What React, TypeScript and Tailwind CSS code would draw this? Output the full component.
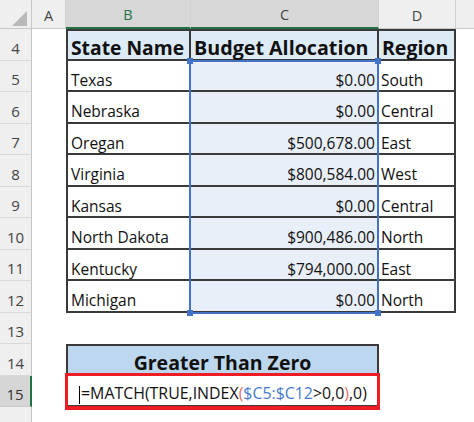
import React from "react";

type R = { n: number; b: string; c: string; d: string };

const data: R[] = [
  { n: 5, b: "Texas", c: "$0.00", d: "South" },
  { n: 6, b: "Nebraska", c: "$0.00", d: "Central" },
  { n: 7, b: "Oregan", c: "$500,678.00", d: "East" },
  { n: 8, b: "Virginia", c: "$800,584.00", d: "West" },
  { n: 9, b: "Kansas", c: "$0.00", d: "Central" },
  { n: 10, b: "North Dakota", c: "$900,486.00", d: "North" },
  { n: 11, b: "Kentucky", c: "$794,000.00", d: "East" },
  { n: 12, b: "Michigan", c: "$0.00", d: "North" },
];

function RowHead({ n, active }: { n?: number; active?: boolean }) {
  return (
    <div
      className={
        active
          ? "w-[32px] shrink-0 flex items-end justify-center pb-[4px] bg-[#d6d6d6] border-r-2 border-r-[#217346] border-b border-b-[#c8c8c8] text-[15px] leading-none text-[#333]"
          : "w-[32px] shrink-0 flex items-end justify-center pb-[4px] bg-[#efefef] border-r border-r-[#c4c4c4] border-b border-b-[#d8d8d8] text-[15px] leading-none text-[#444]"
      }
    >
      {n}
    </div>
  );
}

function ColHead({ label, sel, green, w }: { label: string; sel?: boolean; green?: boolean; w: string }) {
  return (
    <div
      className={
        (sel
          ? "bg-[#d7d7d7] border-b-2 border-b-[#217346] "
          : "bg-[#efefef] border-b border-b-[#c8c8c8] ") +
        "shrink-0 flex items-center justify-center pt-[4px] border-r border-r-[#cfcfcf] text-[14.5px] leading-none " +
        (green ? "text-[#217346] " : "text-[#444] ") +
        w
      }
    >
      {label}
    </div>
  );
}

export default function App() {
  return (
    <div className="w-[474px] h-[422px] overflow-hidden bg-white font-['Open_Sans','Noto_Sans',sans-serif] text-[#111]">
      {/* column headers */}
      <div className="flex h-[29px]">
        <div className="w-[32px] shrink-0 bg-[#efefef] border-r border-r-[#c8c8c8] border-b border-b-[#c8c8c8] relative">
          <svg className="absolute left-[12px] top-[11px]" width="15" height="15" viewBox="0 0 15 15">
            <polygon points="15,0 15,15 0,15" fill="#b9b9b9" />
          </svg>
        </div>
        <ColHead label="A" w="w-[34px]" />
        <ColHead label="B" sel green w="w-[125px]" />
        <ColHead label="C" sel w="w-[188px]" />
        <ColHead label="D" w="w-[77px]" />
        <div className="flex-1 bg-[#efefef] border-b border-b-[#c8c8c8]" />
      </div>

      <div className="relative">
        {/* row 4 header */}
        <div className="flex h-[31.5px]">
          <RowHead n={4} />
          <div className="w-[34px] shrink-0" />
          <div className="w-[125px] shrink-0 bg-[#ddebf7] border-2 border-[#3a3a3a] flex items-end px-[3px] pb-[1px] text-[19.3px] font-bold leading-none whitespace-nowrap">
            State Name
          </div>
          <div className="w-[188px] shrink-0 bg-[#ddebf7] border-y-2 border-r-2 border-[#3a3a3a] flex items-end px-[3px] pb-[1px] text-[19.7px] font-bold leading-none whitespace-nowrap">
            Budget Allocation
          </div>
          <div className="w-[77px] shrink-0 bg-[#ddebf7] border-y-2 border-r-2 border-[#3a3a3a] flex items-end px-[3px] pb-[1px] text-[19.5px] font-bold leading-none whitespace-nowrap">
            Region
          </div>
          <div className="flex-1" />
        </div>

        {data.map((r) => (
          <div key={r.n} className="flex h-[31.5px]">
            <RowHead n={r.n} />
            <div className="w-[34px] shrink-0" />
            <div className="w-[125px] shrink-0 border-x-2 border-b-2 border-[#3a3a3a] flex items-end px-[3px] pb-[2px] text-[15.5px] leading-none whitespace-nowrap">
              {r.b}
            </div>
            <div className="w-[188px] shrink-0 bg-[#e9eff8] border-r-2 border-b-2 border-[#3a3a3a] flex items-end justify-end px-[2px] pb-[2px] text-[15.5px] leading-none whitespace-nowrap">
              {r.c}
            </div>
            <div className="w-[77px] shrink-0 border-r-2 border-b-2 border-[#3a3a3a] flex items-end px-[2px] pb-[2px] text-[15.5px] leading-none whitespace-nowrap">
              {r.d}
            </div>
            <div className="flex-1" />
          </div>
        ))}

        {/* row 13 */}
        <div className="flex h-[31.5px]">
          <RowHead n={13} />
          <div className="flex-1" />
        </div>

        {/* row 14 */}
        <div className="flex h-[31.5px]">
          <RowHead n={14} />
          <div className="w-[34px] shrink-0" />
          <div className="w-[313px] shrink-0 bg-[#bdd7ee] border-2 border-[#3a3a3a] flex items-end justify-center pb-[1px] text-[19.5px] font-bold leading-none whitespace-nowrap">
            Greater Than Zero
          </div>
          <div className="flex-1" />
        </div>

        {/* row 15 */}
        <div className="flex h-[31.5px]">
          <RowHead n={15} active />
          <div className="w-[34px] shrink-0" />
          <div className="w-[313px] shrink-0 relative border-x-2 border-b-2 border-[#3a3a3a] flex items-end pl-[11px] pb-[3px] text-[15.9px] leading-none whitespace-nowrap">
            <span className="inline-block w-[1px] h-[18px] bg-black mr-[1px] self-end mb-[-2px]" />
            <span>=MATCH(TRUE,INDEX</span>
            <span className="text-[#e0706e]">(</span>
            <span className="text-[#4a7bd0]">$C5:$C12</span>
            <span>&gt;0,0</span>
            <span className="text-[#e0706e]">)</span>
            <span>,0)</span>
            <div className="absolute left-[-3px] top-[-3px] right-[-3px] bottom-[-5px] border-[3px] border-b-[4px] border-[#ee1c24]" />
          </div>
          <div className="flex-1" />
        </div>

        {/* row 16 (partially visible) */}
        <div className="flex h-[31.5px]">
          <RowHead />
          <div className="flex-1" />
        </div>

        {/* range highlight of $C5:$C12 */}
        <div className="absolute left-[189px] top-[30.5px] w-[190px] h-[254px] border-2 border-[#4472c4] pointer-events-none">
          <div className="absolute left-[-4px] top-[-4px] w-[6px] h-[6px] bg-[#4472c4]" />
          <div className="absolute right-[-4px] top-[-4px] w-[6px] h-[6px] bg-[#4472c4]" />
          <div className="absolute left-[-4px] bottom-[-4px] w-[6px] h-[6px] bg-[#4472c4]" />
          <div className="absolute right-[-4px] bottom-[-4px] w-[6px] h-[6px] bg-[#4472c4]" />
        </div>
      </div>
    </div>
  );
}
